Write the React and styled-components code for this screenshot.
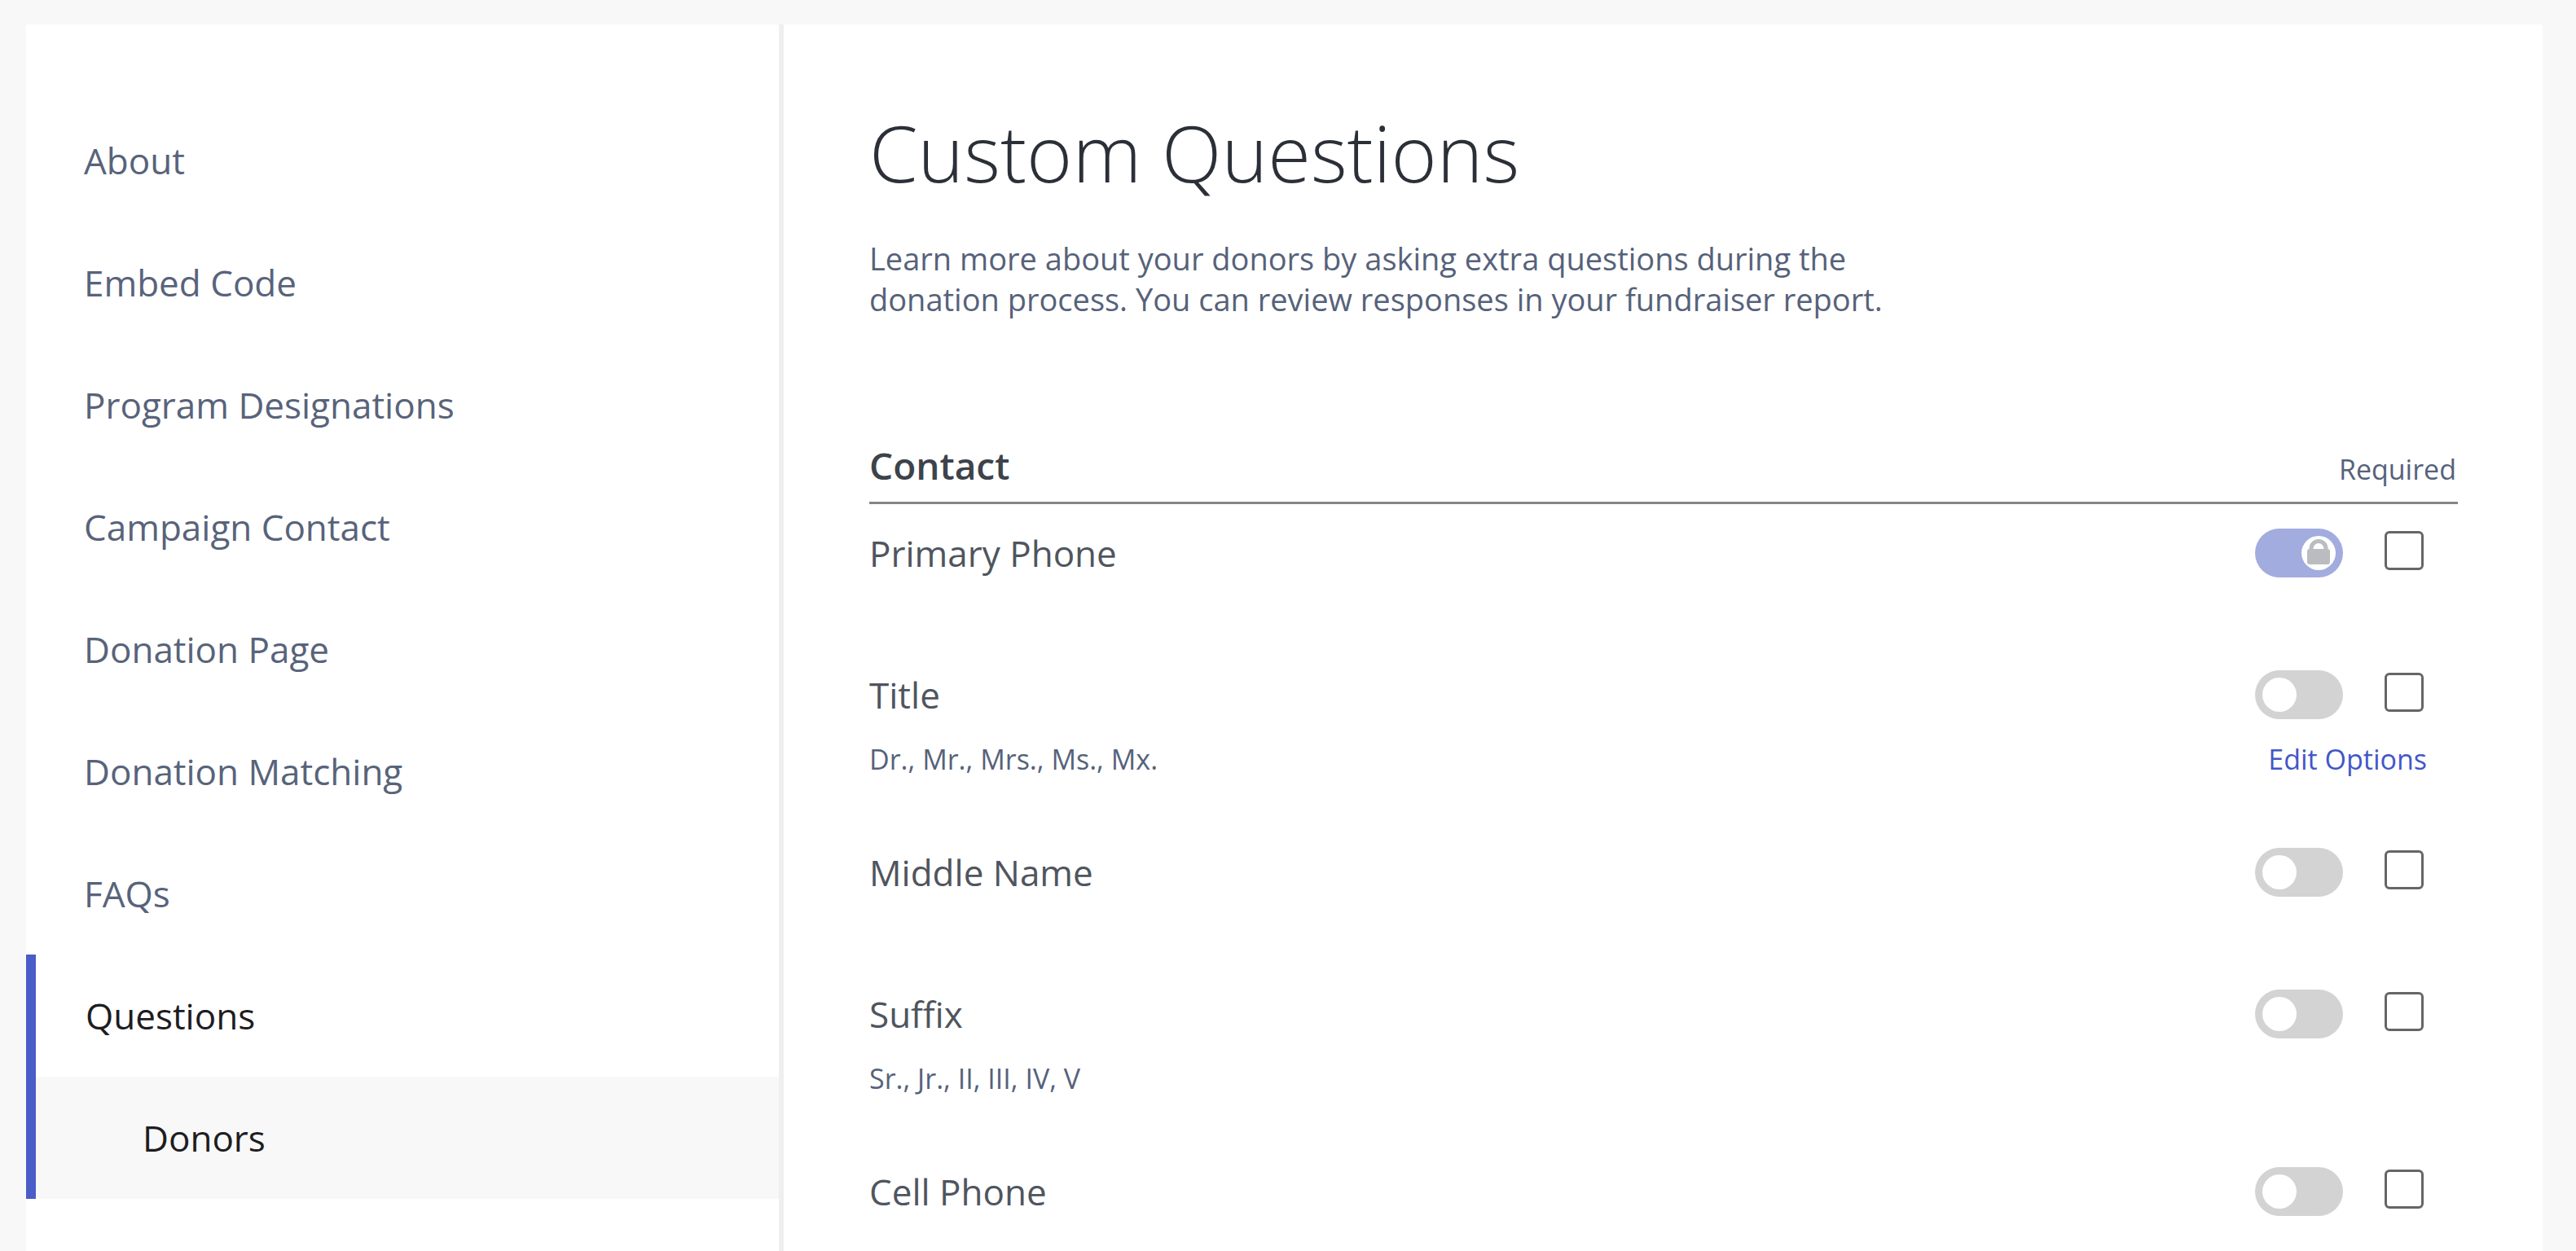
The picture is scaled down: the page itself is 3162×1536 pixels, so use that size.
import React from 'react';
import styled, { createGlobalStyle } from 'styled-components';

const GlobalStyle = createGlobalStyle`
  html, body { margin: 0; padding: 0; background: #f8f8f8; }
  body { font-family: "Open Sans", "Liberation Sans", sans-serif; }
  *, *::before, *::after { box-sizing: border-box; }
`;

const Page = styled.div`
  display: flex;
  align-items: stretch;
  min-height: 100vh;
  padding: 30px 41px 0 32px;
`;

const Sidebar = styled.nav`
  flex: none;
  width: 930px;
  background: #ffffff;
  border-right: 6px solid #efefef;
  padding-top: 92px;
`;

const NavItem = styled.div`
  display: flex;
  align-items: center;
  height: 150px;
  padding-left: 71px;
  font-size: 44px;
  color: #58637a;
`;

const NavGroup = styled.div`
  border-left: 12px solid #4a5cc8;
`;

const NavActive = styled(NavItem)`
  padding-left: 61px;
  color: #1d1d1f;
`;

const NavSub = styled(NavItem)`
  padding-left: 131px;
  background: #f8f8f8;
  color: #1d1d1f;
`;

const Main = styled.main`
  flex: 1;
  background: #ffffff;
  padding: 99px 104px 60px 105px;
`;

const Title = styled.h1`
  margin: 0;
  font-size: 96px;
  font-weight: 300;
  line-height: 115px;
  color: #2b3038;
`;

const Intro = styled.p`
  margin: 48px 0 0;
  font-size: 38px;
  line-height: 50px;
  color: #56627a;
`;

const Section = styled.section`
  margin-top: 152px;
`;

const SectionHeader = styled.div`
  display: flex;
  justify-content: space-between;
  align-items: baseline;
  padding-bottom: 17px;
  border-bottom: 3px solid #858585;
`;

const SectionTitle = styled.h2`
  margin: 0;
  font-size: 46px;
  font-weight: 600;
  line-height: 55px;
  color: #3d434b;
`;

const ColumnLabel = styled.span`
  font-size: 34px;
  color: #56627a;
  padding-right: 2px;
`;

const Row = styled.div`
  padding: 30px 0 57px;
`;

const RowMain = styled.div`
  display: flex;
  align-items: center;
  justify-content: space-between;
  min-height: 60px;
`;

const Label = styled.span`
  font-size: 44px;
  color: #4f555e;
`;

const Controls = styled.div`
  display: flex;
  align-items: center;
  gap: 51px;
  padding-right: 42px;
`;

const Toggle = styled.span`
  display: flex;
  justify-content: ${(p) => (p.$on ? 'flex-end' : 'flex-start')};
  align-items: center;
  width: 108px;
  height: 60px;
  padding: 9px;
  border-radius: 30px;
  background: ${(p) => (p.$on ? '#a3acdf' : '#d3d3d3')};
`;

const Knob = styled.span`
  display: flex;
  width: 42px;
  height: 42px;
  border-radius: 50%;
  background: #ffffff;
`;

const Checkbox = styled.span`
  display: block;
  width: 48px;
  height: 48px;
  margin-top: -6px;
  border: 3px solid #666666;
  border-radius: 6px;
  background: #ffffff;
`;

const Meta = styled.div`
  display: flex;
  justify-content: space-between;
  padding-top: 27px;
  font-size: 34px;
  line-height: 44px;
`;

const Hint = styled.span`
  color: #56627a;
`;

const EditLink = styled.a`
  color: #4356c8;
  font-size: 34px;
  padding-right: 38px;
  text-decoration: none;
  cursor: pointer;
`;

const LockIcon = () => (
  <svg width="42" height="42" viewBox="0 0 42 42" aria-hidden="true">
    <path d="M12 18 V15.5 A9 9 0 0 1 30 15.5 V18" fill="none" stroke="#b9bdc0" strokeWidth="5" />
    <rect x="7" y="16" width="28" height="19" rx="3" fill="#b9bdc0" />
  </svg>
);

const navItems = [
  'About',
  'Embed Code',
  'Program Designations',
  'Campaign Contact',
  'Donation Page',
  'Donation Matching',
  'FAQs',
];

const questions = [
  { label: 'Primary Phone', on: true, locked: true },
  { label: 'Title', hint: 'Dr., Mr., Mrs., Ms., Mx.', edit: true },
  { label: 'Middle Name' },
  { label: 'Suffix', hint: 'Sr., Jr., II, III, IV, V' },
  { label: 'Cell Phone' },
];

export default function App() {
  return (
    <>
      <GlobalStyle />
      <Page>
        <Sidebar>
          {navItems.map((item) => (
            <NavItem key={item}>{item}</NavItem>
          ))}
          <NavGroup>
            <NavActive>Questions</NavActive>
            <NavSub>Donors</NavSub>
          </NavGroup>
        </Sidebar>
        <Main>
          <Title>Custom Questions</Title>
          <Intro>
            Learn more about your donors by asking extra questions during the
            <br />
            donation process. You can review responses in your fundraiser report.
          </Intro>
          <Section>
            <SectionHeader>
              <SectionTitle>Contact</SectionTitle>
              <ColumnLabel>Required</ColumnLabel>
            </SectionHeader>
            {questions.map((q) => (
              <Row key={q.label}>
                <RowMain>
                  <Label>{q.label}</Label>
                  <Controls>
                    <Toggle $on={q.on}>
                      <Knob>{q.locked && <LockIcon />}</Knob>
                    </Toggle>
                    <Checkbox />
                  </Controls>
                </RowMain>
                <Meta>
                  <Hint>{q.hint}</Hint>
                  {q.edit && <EditLink>Edit Options</EditLink>}
                </Meta>
              </Row>
            ))}
          </Section>
        </Main>
      </Page>
    </>
  );
}
